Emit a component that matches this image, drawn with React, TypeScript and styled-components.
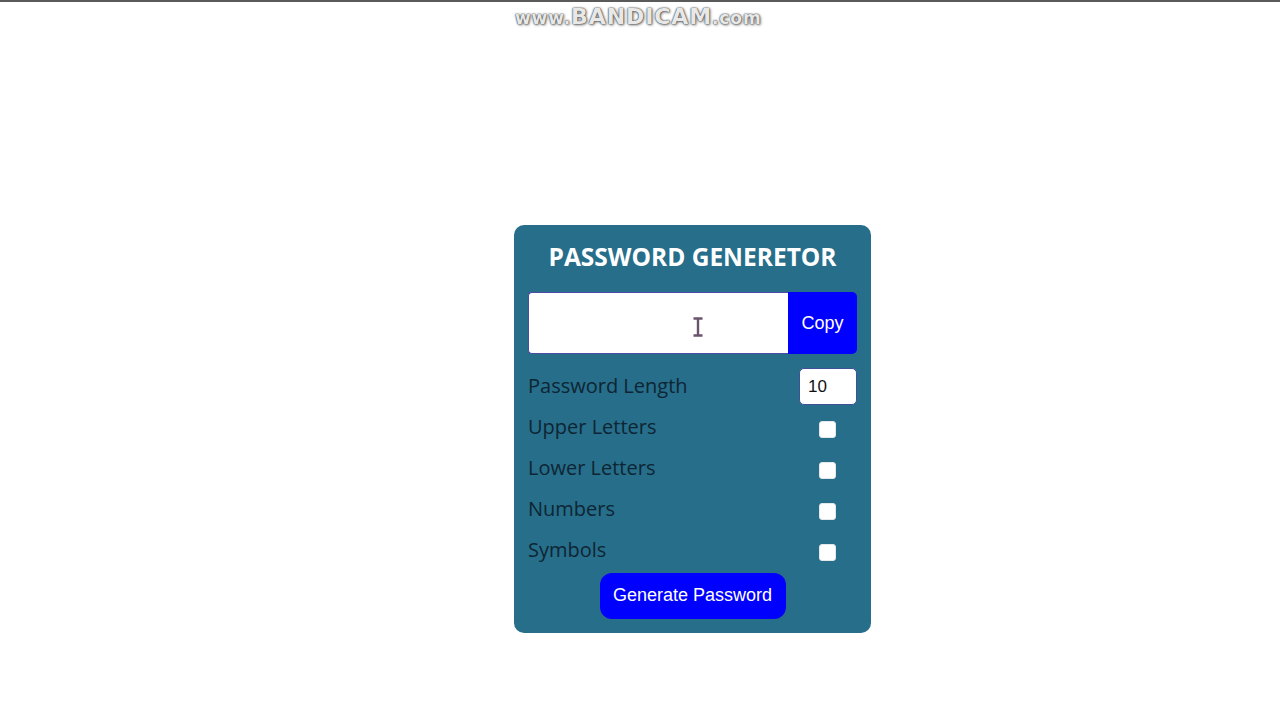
import styled, { createGlobalStyle } from 'styled-components';

const GlobalStyle = createGlobalStyle`
    html, body {
        margin: 0;
        padding: 0;
        background: #ffffff;
    }
`;

const Page = styled.div`
    position: relative;
    width: 1280px;
    height: 720px;
    box-sizing: border-box;
    padding: 223px 0 0 514px;
    border-top: 2px solid #5a5a5a;
    overflow: hidden;
`;

const Watermark = styled.div`
    position: absolute;
    top: 2px;
    left: 515px;
    font-family: "DejaVu Sans", "Liberation Sans", sans-serif;
    font-weight: 700;
    font-size: 22px;
    letter-spacing: 0.9px;
    color: #e8e8e8;
    text-shadow: 0 0 1px #444, 0 0 2px #555, 1px 1px 3px #777;
    span {
        font-size: 17px;
    }
`;

const Card = styled.div`
    width: 357px;
    height: 408px;
    box-sizing: border-box;
    padding: 15px 14px 14px;
    background: #266e8a;
    border-radius: 10px;
    display: flex;
    flex-direction: column;
`;

const Title = styled.h1`
    margin: 0 0 19px;
    height: 33px;
    line-height: 33px;
    text-align: center;
    color: #ffffff;
    font-family: "Open Sans", "Noto Sans", sans-serif;
    font-weight: 700;
    font-size: 24.5px;
`;

const InputGroup = styled.div`
    position: relative;
    display: flex;
    height: 63px;
`;

const PasswordField = styled.input`
    flex: 1;
    min-width: 0;
    box-sizing: border-box;
    border: 1px solid #4b4ba8;
    border-right: none;
    border-radius: 4px 0 0 4px;
    background: #ffffff;
    outline: none;
    font-family: "Liberation Sans", Arial, sans-serif;
    font-size: 18px;
    padding: 0 10px;
`;

const CopyButton = styled.button`
    width: 69px;
    border: none;
    border-radius: 0 5px 5px 0;
    background: #0000ff;
    color: #ffffff;
    font-family: "Liberation Sans", Arial, sans-serif;
    font-size: 18px;
    padding: 0;
`;

const Cursor = styled.svg`
    position: absolute;
    left: 164px;
    top: 25px;
`;

const Row = styled.label<{ $height: number }>`
    display: flex;
    align-items: center;
    justify-content: space-between;
    height: ${(p) => p.$height}px;
`;

const LengthRow = styled(Row)`
    margin-top: 14px;
    margin-bottom: 2px;
`;

const Label = styled.span`
    padding-bottom: 2px;
    font-family: "Open Sans", "Noto Sans", sans-serif;
    font-size: 20px;
    color: #0e2533;
`;

const Control = styled.div`
    width: 58px;
    display: flex;
    justify-content: center;
`;

const NumberInput = styled.input`
    width: 58px;
    height: 37px;
    box-sizing: border-box;
    border: 1px solid #3f4f9a;
    border-radius: 5px;
    background: #ffffff;
    padding: 0 0 0 8px;
    font-family: "Liberation Sans", Arial, sans-serif;
    font-size: 17px;
    color: #111;
    outline: none;
`;

const Check = styled.input`
    appearance: none;
    margin: 4px 0 0 -1px;
    width: 17px;
    height: 17px;
    background: #ffffff;
    border: 1px solid #e4e8ea;
    border-radius: 3px;
`;

const GenerateButton = styled.button`
    align-self: center;
    width: 186px;
    height: 47px;
    margin-top: 1px;
    border: none;
    border-radius: 12px;
    background: #0000ff;
    color: #ffffff;
    font-family: "Liberation Sans", Arial, sans-serif;
    font-size: 18px;
`;

const options = ['Upper Letters', 'Lower Letters', 'Numbers', 'Symbols'];

const App = () => {
    return (
        <Page>
            <GlobalStyle />
            <Watermark>
                <span>www.</span>BANDICAM<span>.com</span>
            </Watermark>
            <Card>
                <Title>PASSWORD GENERETOR</Title>
                <InputGroup>
                    <PasswordField readOnly />
                    <CopyButton>Copy</CopyButton>
                    <Cursor width="12" height="20" viewBox="0 0 12 20">
                        <path
                            d="M1 1.5h10M1 18.5h10M6 1.5v17"
                            stroke="#ffffff"
                            strokeWidth="4"
                            fill="none"
                        />
                        <path
                            d="M1.5 1.5h9M1.5 18.5h9M6 1.5v17"
                            stroke="#6a546c"
                            strokeWidth="2.4"
                            fill="none"
                        />
                    </Cursor>
                </InputGroup>
                <LengthRow $height={37}>
                    <Label>Password Length</Label>
                    <Control>
                        <NumberInput type="text" defaultValue="10" />
                    </Control>
                </LengthRow>
                {options.map((o) => (
                    <Row key={o} $height={41.5}>
                        <Label>{o}</Label>
                        <Control>
                            <Check type="checkbox" />
                        </Control>
                    </Row>
                ))}
                <GenerateButton>Generate Password</GenerateButton>
            </Card>
        </Page>
    );
};

export default App;
